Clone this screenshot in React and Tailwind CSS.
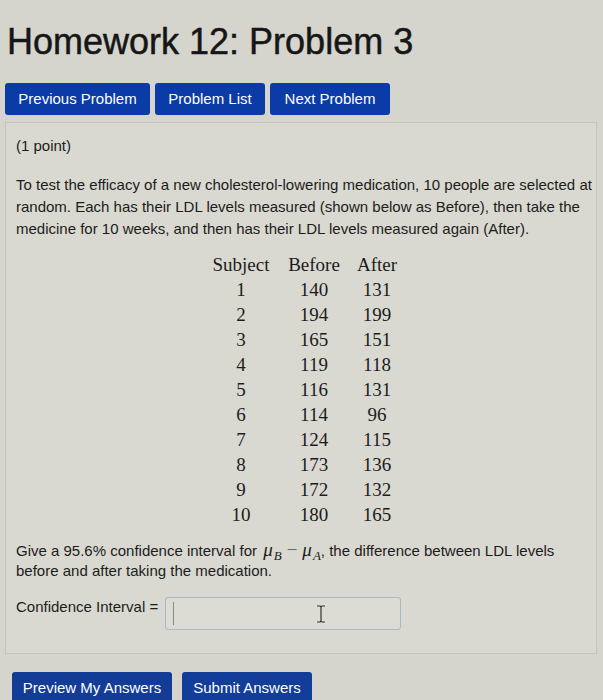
import React from "react";

const rows = [
  [1, 140, 131],
  [2, 194, 199],
  [3, 165, 151],
  [4, 119, 118],
  [5, 116, 131],
  [6, 114, 96],
  [7, 124, 115],
  [8, 173, 136],
  [9, 172, 132],
  [10, 180, 165],
];

function NavButton({ children, w }) {
  return (
    <button className={`${w} h-[32px] rounded-[3px] bg-[#0b3ba6] text-[15px] text-white`}>
      {children}
    </button>
  );
}

export default function App() {
  return (
    <div
      className="min-h-[700px] bg-[#d5d5cd] px-[5px] text-[#1c1c1c]"
      style={{ fontFamily: '"Liberation Sans", Arial, sans-serif' }}
    >
      <h1 className="pt-[18px] pl-[2px] text-[36px] leading-[48px] font-normal text-[#161616] [-webkit-text-stroke:0.5px_#161616]">
        Homework 12: Problem 3
      </h1>

      <div className="mt-[17px] flex gap-[5px]">
        <NavButton w="w-[145px]">Previous Problem</NavButton>
        <NavButton w="w-[110px]">Problem List</NavButton>
        <NavButton w="w-[120px]">Next Problem</NavButton>
      </div>

      <div className="mt-[7px] mr-[1px] border border-[#c4c4bc] bg-[#d9d9d1] pl-[10px] pr-[2px] pt-[13px] pb-[23px]">
        <div className="text-[15px] leading-[20px]">(1 point)</div>

        <p className="mt-[18px] text-[15px] leading-[22px]">
          To test the efficacy of a new cholesterol-lowering medication, 10 people are selected at random. Each has their LDL
          levels measured (shown below as Before), then take the medicine for 10 weeks, and then has their LDL levels measured
          again (After).
        </p>

        <div
          className="mt-[12px] ml-[189px] grid grid-cols-[72px_74px_52px] text-[19px] leading-[25px]"
          style={{ fontFamily: '"Liberation Serif", "Times New Roman", serif' }}
        >
          <div className="text-center">Subject</div>
          <div className="text-center">Before</div>
          <div className="text-center">After</div>
          {rows.map(([s, b, a]) => (
            <React.Fragment key={s}>
              <div className="text-center">{s}</div>
              <div className="text-center">{b}</div>
              <div className="text-center">{a}</div>
            </React.Fragment>
          ))}
        </div>

        <p className="mt-[14px] pr-[8px] text-[15px] leading-[20px]">
          Give a 95.6% confidence interval for{" "}
          <span
            className="ml-[2px] text-[19px] leading-[16px]"
            style={{ fontFamily: '"Liberation Serif", "Times New Roman", serif' }}
          >
            <i>μ</i>
            <span className="relative top-[4px] ml-[1px] text-[13px] italic">B</span>
            <span className="mx-[5px] text-[#666]">−</span>
            <i>μ</i>
            <span className="relative top-[4px] ml-[1px] text-[13px] italic">A</span>
          </span>
          , the difference between LDL levels before and after taking the medication.
        </p>

        <div className="mt-[16px] flex items-start gap-[7px]">
          <span className="text-[15px] leading-[20px]">Confidence Interval =</span>
          <div className="relative h-[33px] w-[236px] rounded-[3px] border border-[#a9b7c6] bg-[#dcdcd5]">
            <div className="absolute left-[7px] top-[4px] h-[23px] w-[1px] bg-[#8a8a86]" />
            <svg className="absolute left-[150px] top-[7px]" width="10" height="18" viewBox="0 0 10 18">
              <path d="M1 1h3l1 1 1-1h3M5 2v14M1 17h3l1-1 1 1h3" fill="none" stroke="#333" strokeWidth="1.2" />
            </svg>
          </div>
        </div>
      </div>

      <div className="mt-[18px] ml-[7px] flex gap-[10px]">
        <button className="h-[32px] w-[160px] rounded-[3px] bg-[#133c96] text-[15px] text-white">Preview My Answers</button>
        <button className="h-[32px] w-[130px] rounded-[3px] bg-[#123d98] text-[15px] text-white">Submit Answers</button>
      </div>
    </div>
  );
}
